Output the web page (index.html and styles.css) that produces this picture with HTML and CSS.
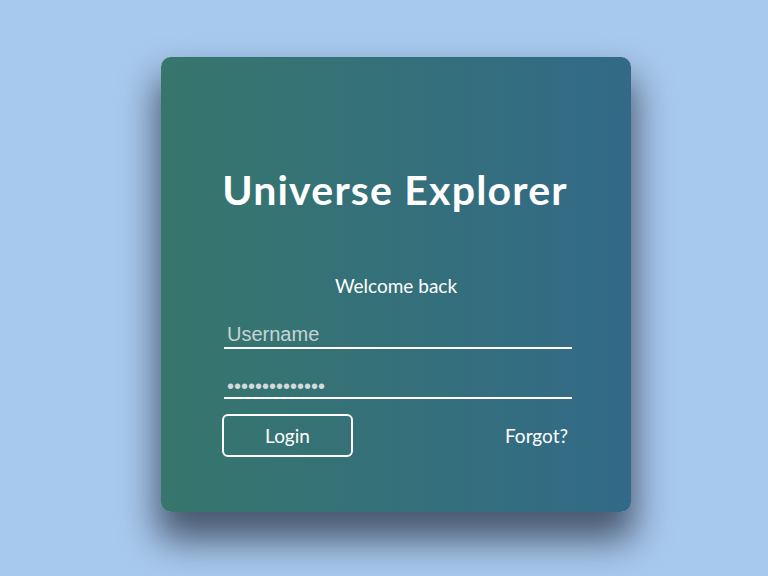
FILE: index.html
```html
<!DOCTYPE html>
<html>
<head>
<meta charset="utf-8">
<link rel="stylesheet" href="styles.css">
</head>
<body>
<div class="page">
  <div class="card">
    <h1 class="title">Universe Explorer</h1>
    <p class="welcome">Welcome back</p>
    <form class="form">
      <input class="field" type="text" placeholder="Username">
      <input class="field pass" type="password" value="12345678901234">
      <div class="actions">
        <button class="login" type="button">Login</button>
        <a class="forgot">Forgot?</a>
      </div>
    </form>
  </div>
</div>
</body>
</html>
```
FILE: styles.css
```css
html, body {
  margin: 0;
  padding: 0;
  background: #a8c9ee;
  height: 100%;
}
.page {
  padding: 57px 0 0 161px;
}
.card {
  width: 470px;
  height: 455px;
  box-sizing: border-box;
  border-radius: 10px;
  background: linear-gradient(to right, #37766d, #326a87);
  box-shadow: 0 24px 36px 4px rgba(20, 26, 40, 0.65);
  padding: 108px 59px 0 63px;
  font-family: "Lato", "Noto Sans", sans-serif;
  color: #fff;
}
.title {
  margin: 0 3px 0 -3px;
  text-align: center;
  font-size: 41px;
  letter-spacing: 1.2px;
  font-weight: 700;
  line-height: 50px;
}
.welcome {
  margin: 59px 2px 0 -2px;
  text-align: center;
  font-size: 19px;
  line-height: 24px;
}
.form {
  display: flex;
  flex-direction: column;
}
.field {
  display: block;
  width: 348px;
  box-sizing: border-box;
  background: transparent;
  border: none;
  border-bottom: 2px solid #fff;
  outline: none;
  color: #d4dada;
  font-family: "Liberation Sans", Arial, sans-serif;
  font-size: 20px;
  padding: 6px 3px 1px;
  margin-top: 19px;
}
.field::placeholder {
  color: #c9d3d4;
}
.pass {
  margin-top: 18px;
  padding: 8px 3px 0;
  height: 32px;
}
.actions {
  margin-top: 15px;
  display: flex;
  justify-content: space-between;
  align-items: center;
  width: 348px;
}
.login {
  width: 131px;
  height: 43px;
  margin-left: -2px;
  background: transparent;
  border: 2px solid #fff;
  border-radius: 6px;
  color: #fff;
  font-family: "Lato", "Noto Sans", sans-serif;
  font-size: 19px;
}
.forgot {
  font-size: 19px;
  margin-right: 4px;
}
```
